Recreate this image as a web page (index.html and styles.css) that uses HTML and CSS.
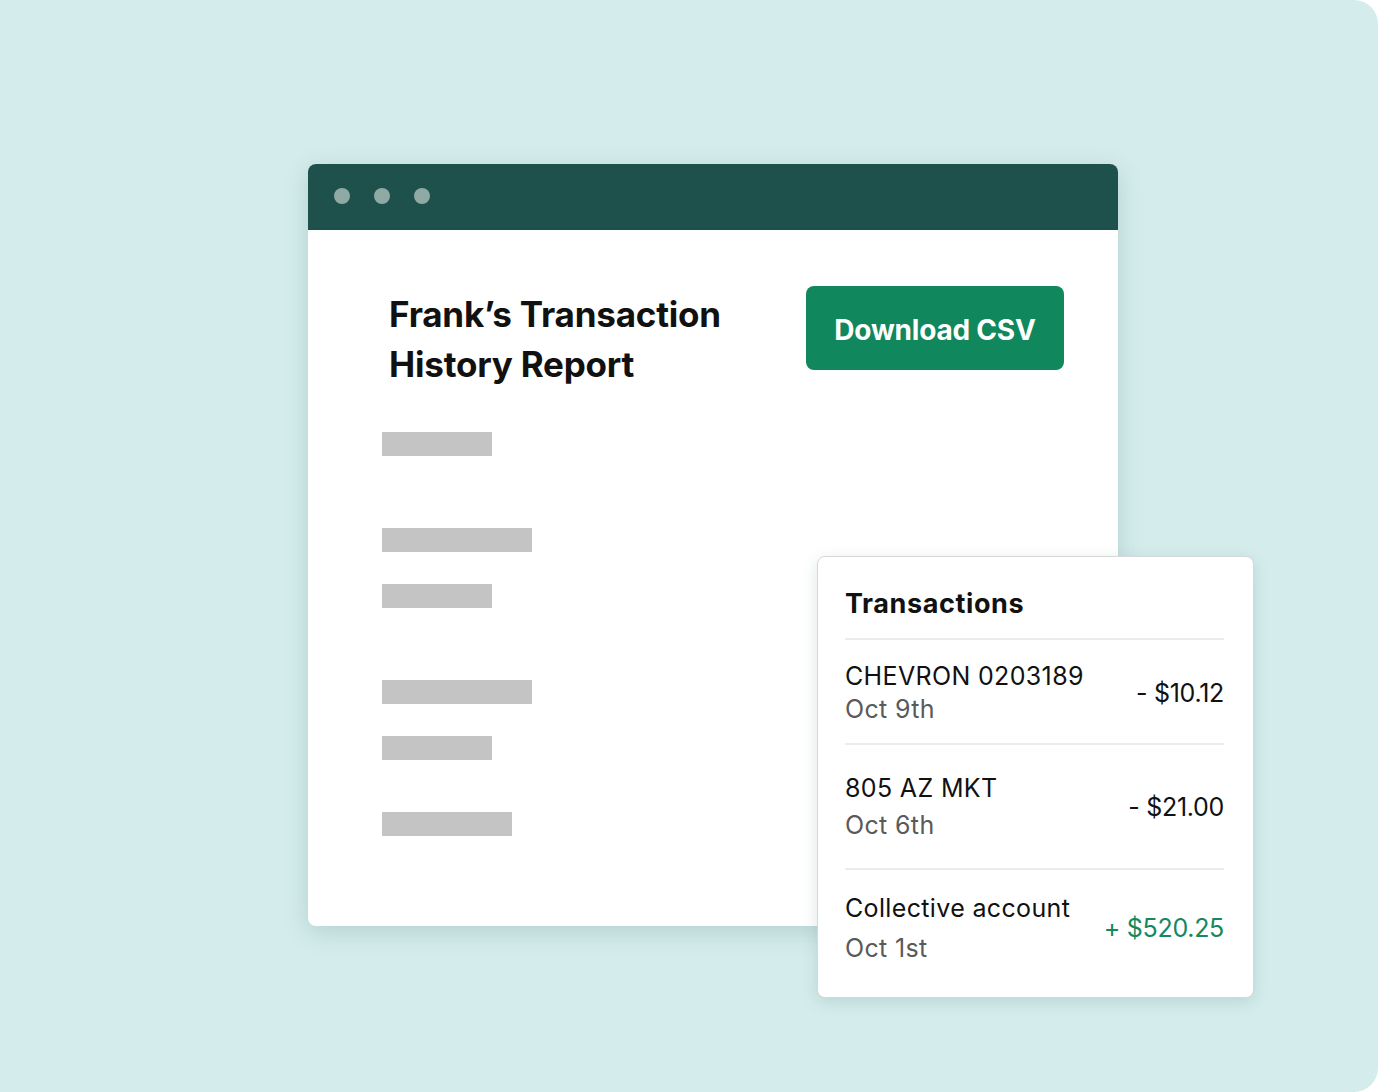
FILE: index.html
```html
<!DOCTYPE html>
<html>
<head>
<meta charset="utf-8">
<link rel="stylesheet" href="styles.css">
</head>
<body>
<div class="stage">
  <div class="window">
    <div class="titlebar">
      <span class="dot"></span><span class="dot"></span><span class="dot"></span>
    </div>
    <div class="content">
      <div class="header">
        <h1 class="title">Frank’s Transaction<br>History Report</h1>
        <button class="btn">Download CSV</button>
      </div>
      <div class="bars">
        <div class="bar w110 first"></div>
        <div class="bar w150 big"></div>
        <div class="bar w110 small"></div>
        <div class="bar w150 big"></div>
        <div class="bar w110 small"></div>
        <div class="bar w130 mid"></div>
      </div>
    </div>
  </div>
  <div class="card">
    <h2 class="card-title">Transactions</h2>
    <div class="row r1">
      <div class="info"><div class="name">CHEVRON 0203189</div><div class="date">Oct 9th</div></div>
      <div class="amount">- $10.12</div>
    </div>
    <div class="row r2">
      <div class="info"><div class="name">805 AZ MKT</div><div class="date">Oct 6th</div></div>
      <div class="amount">- $21.00</div>
    </div>
    <div class="row r3">
      <div class="info"><div class="name">Collective account</div><div class="date">Oct 1st</div></div>
      <div class="amount plus">+ $520.25</div>
    </div>
  </div>
</div>
</body>
</html>
```
FILE: styles.css
```css
html, body { margin: 0; padding: 0; background: #ffffff; }
body { font-family: "Inter", "Liberation Sans", sans-serif; }
.stage {
  position: relative;
  width: 1378px;
  height: 1092px;
  background: #d4ecec;
  border-radius: 0 24px 24px 0;
  overflow: hidden;
  padding-top: 164px;
  padding-left: 308px;
  box-sizing: border-box;
}
.window {
  width: 810px;
  height: 762px;
  background: #ffffff;
  border-radius: 8px;
  overflow: hidden;
  box-shadow: 0 6px 24px rgba(40, 90, 85, 0.18);
}
.titlebar {
  height: 66px;
  background: #1f514c;
  display: flex;
  align-items: center;
  gap: 24px;
  padding-left: 26px;
  padding-bottom: 3px;
  box-sizing: border-box;
}
.dot {
  width: 16px; height: 16px; border-radius: 50%;
  background: #8fa9a4;
}
.header {
  display: flex;
  justify-content: space-between;
  align-items: flex-start;
  padding: 56px 54px 0 81px;
}
.title {
  margin: 3px 0 0 0;
  font-size: 35px;
  line-height: 50px;
  font-weight: 700;
  color: #111;
  letter-spacing: -0.2px;
}
.btn {
  width: 258px;
  height: 84px;
  border: none;
  border-radius: 8px;
  background: #10875d;
  color: #fff;
  font-family: "Inter", "Liberation Sans", sans-serif;
  font-size: 28px;
  font-weight: 700;
  letter-spacing: -0.2px;
  padding: 4px 0 0 0;
}
.bars { padding-left: 74px; display: flex; flex-direction: column; align-items: flex-start; }
.bar { height: 24px; background: #c4c4c4; }
.w110 { width: 110px; }
.w130 { width: 130px; }
.w150 { width: 150px; }
.first { margin-top: 43px; }
.big { margin-top: 72px; }
.small { margin-top: 32px; }
.mid { margin-top: 52px; }

.card {
  position: absolute;
  left: 817px;
  top: 556px;
  width: 437px;
  height: 442px;
  box-sizing: border-box;
  background: #fff;
  border: 1px solid #d8d8d8;
  border-radius: 8px;
  box-shadow: 0 4px 16px rgba(40, 90, 85, 0.15);
  padding: 0 29px 0 27px;
}
.card-title {
  margin: 0;
  padding: 30px 0 17px;
  font-size: 27px;
  line-height: 34px;
  font-weight: 700;
  color: #111;
  border-bottom: 2px solid #ececec;
  letter-spacing: 0.6px;
}
.row {
  display: flex;
  justify-content: space-between;
  align-items: center;
  font-size: 25px;
  color: #111;
}
.info { letter-spacing: 0.35px; }
.amount { letter-spacing: -0.3px; }
.row + .row { border-top: 2px solid #ececec; }
.date { color: #5a5a5a; }
.r1 { line-height: 33px; padding: 20px 0 17px; }
.r2 { line-height: 37px; padding: 25px 0 24px; }
.r3 { line-height: 40px; padding: 18px 0 29px; }
.amount.plus { color: #14885e; }
```
